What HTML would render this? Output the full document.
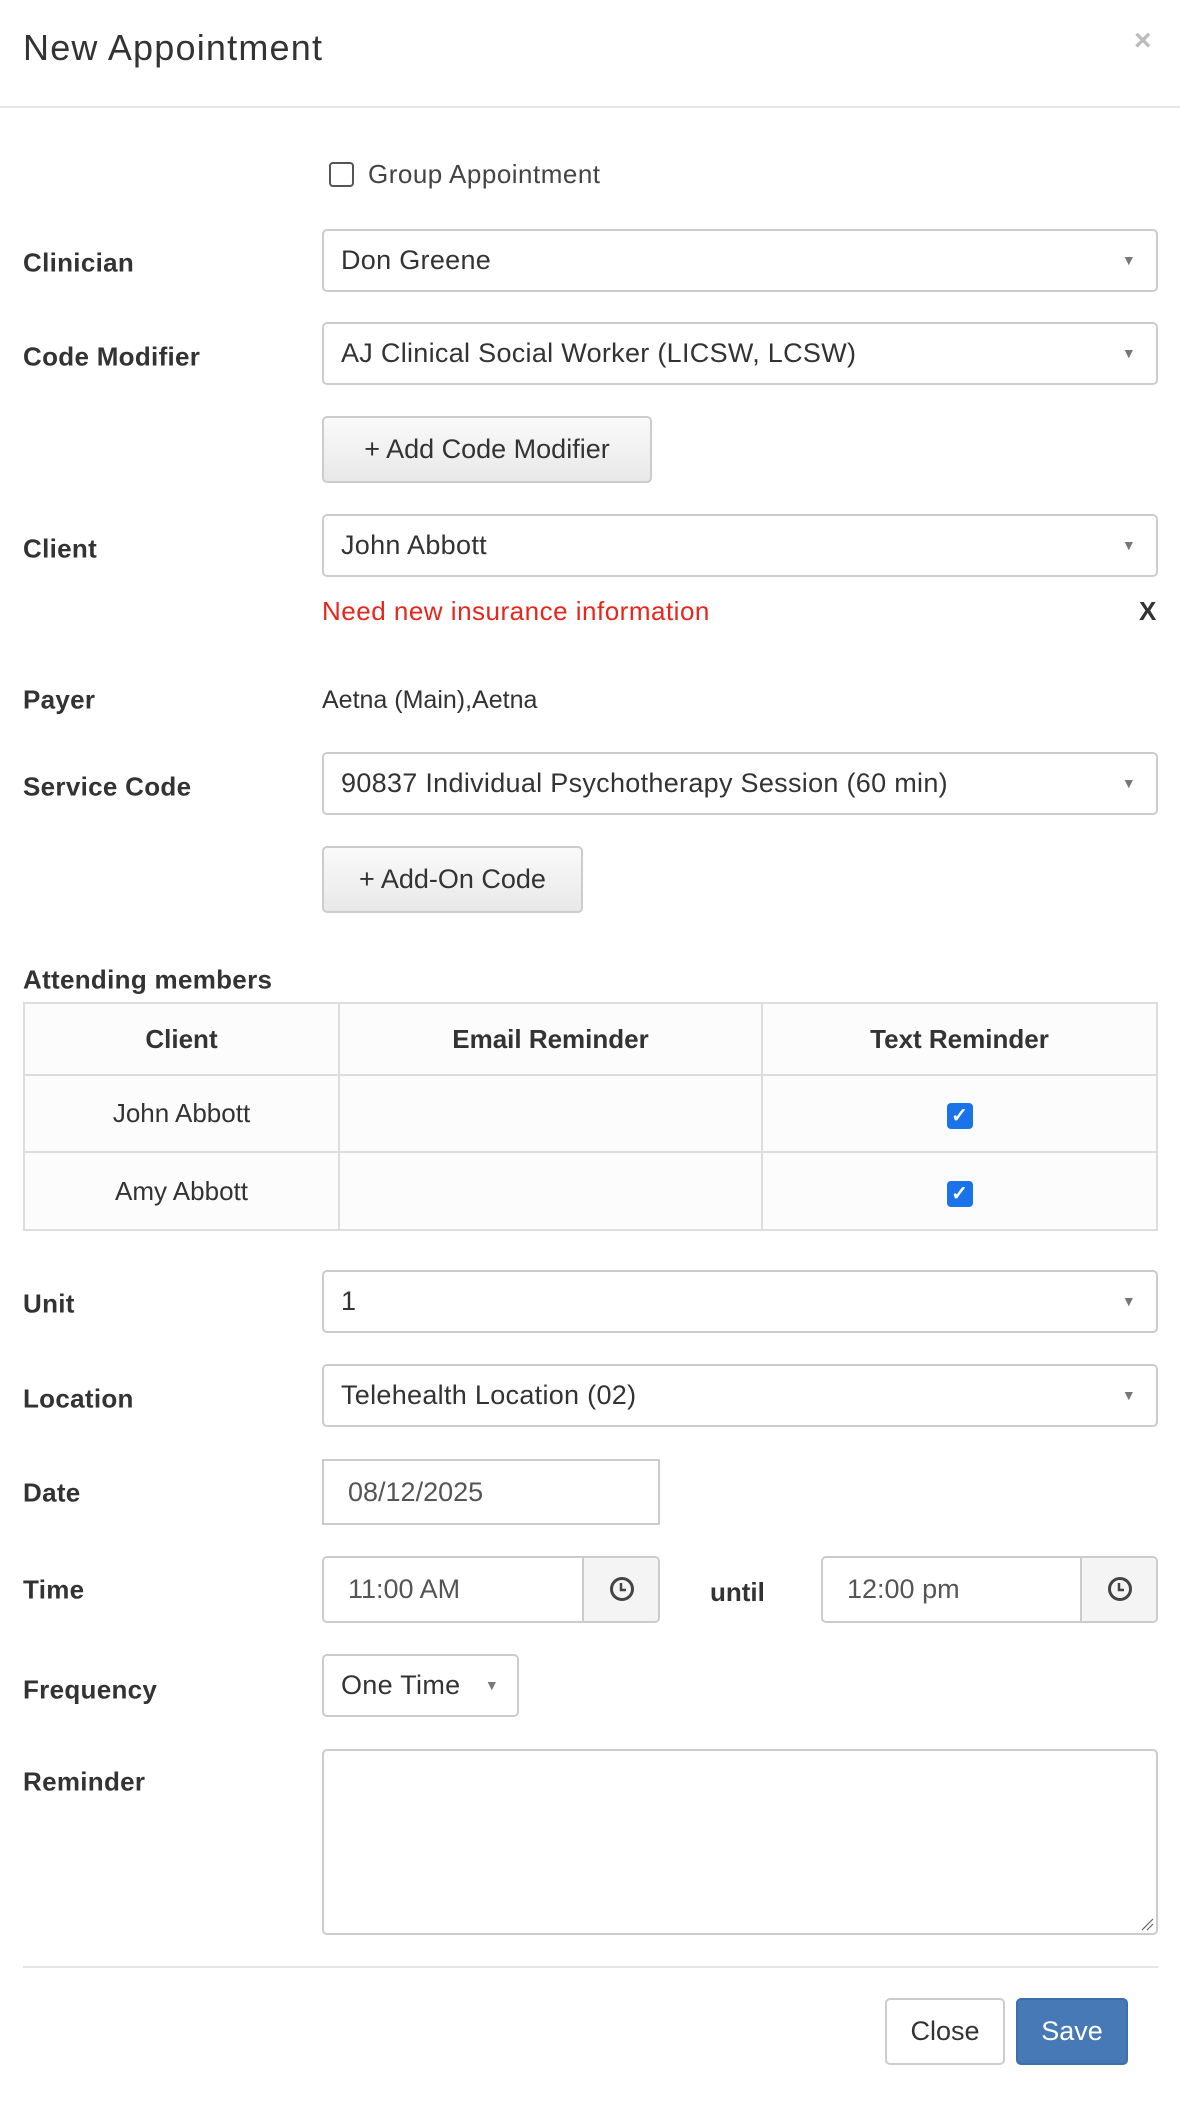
<!DOCTYPE html>
<html><head><meta charset="utf-8">
<style>
*{box-sizing:border-box;margin:0;padding:0}
body{width:1180px;height:2124px;background:#fff;font-family:"Liberation Sans",sans-serif;color:#333;position:relative;overflow:hidden}
.a{position:absolute}
.lbl{position:absolute;left:23px;font-weight:bold;font-size:26px;color:#333;transform:translateY(-50%);letter-spacing:0.3px}
.sel{position:absolute;left:322px;width:836px;height:63px;border:2px solid #ccc;border-radius:5px;font-size:27px;padding-left:17px;line-height:59px;color:#333;letter-spacing:0.3px}
.sel .car{position:absolute;right:20px;top:0;font-size:14px;color:#777}
.btn{position:absolute;left:322px;height:67px;border:2px solid #ccc;border-radius:5px;background:linear-gradient(#fafafa,#e8e8e8);font-size:27px;line-height:63px;text-align:center;color:#333}
.inp{position:absolute;border:2px solid #ccc;font-size:27px;color:#555;padding-left:24px}
td,th{border:2px solid #ddd;font-size:26px;text-align:center;color:#333}
th{font-weight:bold}
.cb{display:inline-block;width:26px;height:26px;background:#1a73e8;border-radius:4px;color:#fff;font-size:20px;line-height:26px;font-weight:bold}
</style></head><body>
<div class="a" style="left:23px;top:27px;font-size:36px;color:#333;letter-spacing:1.2px">New Appointment</div>
<div class="a" style="left:1134px;top:24px;font-size:30px;color:#bbb;font-weight:bold">×</div>
<div class="a" style="left:0;top:106px;width:1180px;height:2px;background:#e5e5e5"></div>

<div class="a" style="left:329px;top:162px;width:25px;height:25px;border:2px solid #555;border-radius:4px"></div>
<div class="a" style="left:368px;top:159px;font-size:26px;color:#444;letter-spacing:0.5px">Group Appointment</div>

<div class="lbl" style="top:263px">Clinician</div>
<div class="sel" style="top:229px">Don Greene<span class="car">▼</span></div>
<div class="lbl" style="top:357px">Code Modifier</div>
<div class="sel" style="top:322px">AJ Clinical Social Worker (LICSW, LCSW)<span class="car">▼</span></div>
<div class="btn" style="top:416px;width:330px">+ Add Code Modifier</div>
<div class="lbl" style="top:549px">Client</div>
<div class="sel" style="top:514px">John Abbott<span class="car">▼</span></div>
<div class="a" style="left:322px;top:596px;font-size:26px;color:#e8261c;letter-spacing:0.5px">Need new insurance information</div>
<div class="a" style="left:1139px;top:596px;font-size:26px;color:#333;font-weight:bold">X</div>
<div class="lbl" style="top:700px">Payer</div>
<div class="a" style="left:322px;top:686px;font-size:25px;color:#333">Aetna (Main),Aetna</div>
<div class="lbl" style="top:787px">Service Code</div>
<div class="sel" style="top:752px">90837 Individual Psychotherapy Session (60 min)<span class="car">▼</span></div>
<div class="btn" style="top:846px;width:261px">+ Add-On Code</div>

<div class="lbl" style="top:980px">Attending members</div>
<table class="a" style="left:23px;top:1002px;width:1135px;height:227px;border-collapse:collapse;background:#fcfcfc">
<tr style="height:72px"><th style="width:315px">Client</th><th style="width:423px">Email Reminder</th><th>Text Reminder</th></tr>
<tr style="height:77px"><td>John Abbott</td><td></td><td><span class="cb">✓</span></td></tr>
<tr style="height:78px"><td>Amy Abbott</td><td></td><td><span class="cb">✓</span></td></tr>
</table>

<div class="lbl" style="top:1304px">Unit</div>
<div class="sel" style="top:1270px">1<span class="car">▼</span></div>
<div class="lbl" style="top:1399px">Location</div>
<div class="sel" style="top:1364px">Telehealth Location (02)<span class="car">▼</span></div>
<div class="lbl" style="top:1493px">Date</div>
<div class="inp" style="left:322px;top:1459px;width:338px;height:66px;line-height:62px">08/12/2025</div>
<div class="lbl" style="top:1590px">Time</div>
<div class="inp" style="left:322px;top:1556px;width:338px;height:67px;line-height:63px;border-radius:5px">11:00 AM
<div class="a" style="left:258px;top:0;width:76px;height:63px;border-left:2px solid #ccc;background:#f4f4f4;border-radius:0 4px 4px 0"><svg class="a" style="left:25px;top:18px" width="26" height="26" viewBox="0 0 26 26"><circle cx="13" cy="13" r="10.5" fill="none" stroke="#444" stroke-width="3"/><path d="M12 7v7h5" fill="none" stroke="#444" stroke-width="2.5"/></svg></div></div>
<div class="a" style="left:710px;top:1577px;font-size:26px;font-weight:bold;color:#333">until</div>
<div class="inp" style="left:821px;top:1556px;width:337px;height:67px;line-height:63px;border-radius:5px">12:00 pm
<div class="a" style="left:257px;top:0;width:76px;height:63px;border-left:2px solid #ccc;background:#f4f4f4;border-radius:0 4px 4px 0"><svg class="a" style="left:25px;top:18px" width="26" height="26" viewBox="0 0 26 26"><circle cx="13" cy="13" r="10.5" fill="none" stroke="#444" stroke-width="3"/><path d="M12 7v7h5" fill="none" stroke="#444" stroke-width="2.5"/></svg></div></div>
<div class="lbl" style="top:1690px">Frequency</div>
<div class="sel" style="top:1654px;width:197px;height:63px;line-height:59px">One Time<span class="car" style="right:18px">▼</span></div>
<div class="lbl" style="top:1782px">Reminder</div>
<div class="a" style="left:322px;top:1749px;width:836px;height:186px;border:2px solid #ccc;border-radius:5px"></div>
<svg class="a" style="left:1140px;top:1917px" width="14" height="14" viewBox="0 0 14 14"><path d="M2 13L13 2M7 13L13 7" stroke="#666" stroke-width="1.2"/></svg>
<div class="a" style="left:23px;top:1966px;width:1135px;height:2px;background:#e5e5e5"></div>
<div class="a" style="left:885px;top:1998px;width:120px;height:67px;border:2px solid #ccc;border-radius:5px;font-size:27px;line-height:63px;text-align:center;color:#333">Close</div>
<div class="a" style="left:1016px;top:1998px;width:112px;height:67px;border:2px solid #3f6fa8;border-radius:5px;background:#4679b6;font-size:27px;line-height:63px;text-align:center;color:#fff">Save</div>
</body></html>
